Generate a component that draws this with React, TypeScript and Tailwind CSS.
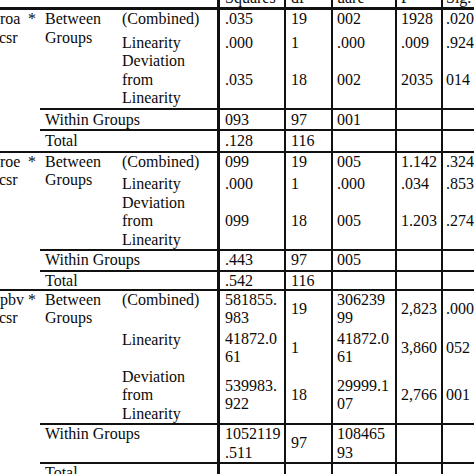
import React from "react";

const N4 = "border-[#111] border-l-[3px] pl-[5px] align-middle whitespace-pre";
const N5 = "border-[#111] border-l-2 pl-[5px] align-middle whitespace-pre";
const N6 = "border-[#111] border-l-2 pl-[4px] align-middle whitespace-pre";
const N7 = "border-[#111] border-l-2 pl-[4px] align-middle whitespace-pre";
const N8 = "border-[#111] border-l-2 pl-[3px] align-middle whitespace-pre";

function Nums({ v, pad, top }: { v: string[]; pad: string; top: string }) {
  return (
    <>
      <td className={`${N4} ${pad} ${top}`}>{v[0]}</td>
      <td className={`${N5} ${pad} ${top}`}>{v[1]}</td>
      <td className={`${N6} ${pad} ${top}`}>{v[2]}</td>
      <td className={`${N7} ${pad} ${top}`}>{v[3]}</td>
      <td className={`${N8} ${pad} ${top}`}>{v[4]}</td>
    </>
  );
}

type GroupProps = {
  name: string;
  top: string;
  lp: string[];
  np: string[];
  vals: string[][];
  tClass?: string;
};

function Group({ name, top, lp, np, vals, tClass = "" }: GroupProps) {
  return (
    <>
      <tr>
        <td rowSpan={5} className={`border-[#111] ${top} ${lp[0]} align-top pr-[4px]`}>
          <div className="flex justify-between">
            <span>{name}</span>
            <span>*</span>
          </div>
          <div className="-ml-px">csr</div>
        </td>
        <td rowSpan={3} className={`border-[#111] ${top} ${lp[0]} align-top pl-[5px]`}>
          Between
          <br />
          Groups
        </td>
        <td className={`border-[#111] ${top} ${lp[0]} align-top pl-[4px] whitespace-nowrap`}>(Combined)</td>
        <Nums v={vals[0]} pad={np[0]} top={top} />
      </tr>
      <tr>
        <td className={`border-[#111] ${lp[1]} align-top pl-[4px]`}>Linearity</td>
        <Nums v={vals[1]} pad={np[1]} top="" />
      </tr>
      <tr>
        <td className={`border-[#111] ${lp[2]} align-top pl-[4px]`}>
          Deviation
          <br />
          from
          <br />
          Linearity
        </td>
        <Nums v={vals[2]} pad={np[2]} top="" />
      </tr>
      <tr>
        <td colSpan={2} className={`border-[#111] border-t-2 ${lp[3]} align-top pl-[5px] whitespace-nowrap`}>
          Within Groups
        </td>
        <Nums v={vals[3]} pad={np[3]} top="border-t-2" />
      </tr>
      <tr className={tClass}>
        <td colSpan={2} className={`border-[#111] border-t-2 ${lp[4]} align-top pl-[5px]`}>Total</td>
        <Nums v={vals[4]} pad={np[4]} top="border-t-2" />
      </tr>
    </>
  );
}

const HD = "border-[#111] border-b-[3px] align-bottom whitespace-nowrap";

export default function App() {
  return (
    <div className="w-[474px] h-[474px] overflow-hidden bg-white text-[#0a0a0a]">
      <table className="mt-[-30px] w-[501px] table-fixed border-separate border-spacing-0 font-['Liberation_Serif',serif] text-[16px] leading-[18.5px]">
        <colgroup>
          <col className="w-[40px]" />
          <col className="w-[78px]" />
          <col className="w-[99px]" />
          <col className="w-[67px]" />
          <col className="w-[47px]" />
          <col className="w-[64px]" />
          <col className="w-[46px]" />
          <col className="w-[60px]" />
        </colgroup>
        <tbody>
          <tr>
            <td colSpan={3} className={HD}></td>
            <td className={`${HD} border-l-[3px] pl-[5px]`}>
              Sum of
              <br />
              Squares
            </td>
            <td className={`${HD} border-l-2 pl-[5px]`}>df</td>
            <td className={`${HD} border-l-2 pl-[4px]`}>
              Mean Sq
              <br />
              uare
            </td>
            <td className={`${HD} border-l-2 pl-[4px]`}>F</td>
            <td className={`${HD} border-l-2 pl-[3px]`}>Sig.</td>
          </tr>
          <Group
            name="roa"
            top=""
            lp={["pt-0 pb-[2px]", "pt-[3px] pb-0", "pt-0 pb-0", "pt-[1px] pb-0", "pt-[1px] pb-0"]}
            np={["pt-0 pb-[2px]", "pt-[3px] pb-0", "pt-0 pb-0", "pt-[1px] pb-0", "pt-[1px] pb-0"]}
            vals={[
              [".035", "19", "002", "1928", ".020"],
              [".000", "1", ".000", ".009", ".924"],
              [".035", "18", "002", "2035", "014"],
              ["093", "97", "001", "", ""],
              [".128", "116", "", "", ""],
            ]}
          />
          <Group
            name="roe"
            top="border-t-2"
            lp={["pt-0 pb-[2px]", "pt-[2px] pb-0", "pt-0 pb-0", "pt-0 pb-0", "pt-0 pb-0"]}
            np={["pt-0 pb-[2px]", "pt-[2px] pb-0", "pt-0 pb-0", "pt-0 pb-0", "pt-0 pb-0"]}
            tClass="leading-[17px]"
            vals={[
              ["099", "19", "005", "1.142", ".324"],
              [".000", "1", ".000", ".034", ".853"],
              ["099", "18", "005", "1.203", ".274"],
              [".443", "97", "005", "", ""],
              [".542", "116", "", "", ""],
            ]}
          />
          <Group
            name="pbv"
            top="border-t-2"
            lp={["pt-0 pb-[1px]", "pt-[2px] pb-0", "pt-0 pb-0", "pt-0 pb-0", "pt-0 pb-[18.5px]"]}
            np={["pt-0 pb-[1px]", "pt-[1px] pb-[1px]", "pt-0 pb-0", "pt-0 pb-0", "pt-0 pb-0"]}
            vals={[
              ["581855.\n983", "19", "306239\n99", "2,823", ".000"],
              ["41872.0\n61", "1", "41872.0\n61", "3,860", "052"],
              ["539983.\n922", "18", "29999.1\n07", "2,766", "001"],
              ["1052119\n.511", "97", "108465\n93", "", ""],
              ["1633875", "116", "", "", ""],
            ]}
          />
        </tbody>
      </table>
    </div>
  );
}
